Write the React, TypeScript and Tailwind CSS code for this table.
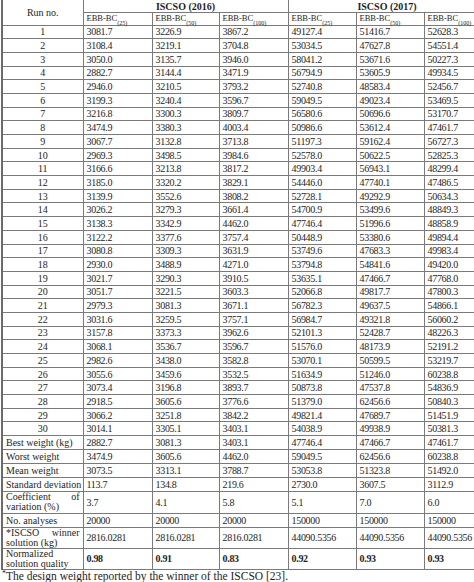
const runs: [string, string, string, string, string, string][] = [
  ['3081.7', '3226.9', '3867.2', '49127.4', '51416.7', '52628.3'],
  ['3108.4', '3219.1', '3704.8', '53034.5', '47627.8', '54551.4'],
  ['3050.0', '3135.7', '3946.0', '58041.2', '53671.6', '50227.3'],
  ['2882.7', '3144.4', '3471.9', '56794.9', '53605.9', '49934.5'],
  ['2946.0', '3210.5', '3793.2', '52740.8', '48583.4', '52456.7'],
  ['3199.3', '3240.4', '3596.7', '59049.5', '49023.4', '53469.5'],
  ['3216.8', '3300.3', '3809.7', '56580.6', '50696.6', '53170.7'],
  ['3474.9', '3380.3', '4003.4', '50986.6', '53612.4', '47461.7'],
  ['3067.7', '3132.8', '3713.8', '51197.3', '59162.4', '56727.3'],
  ['2969.3', '3498.5', '3984.6', '52578.0', '50622.5', '52825.3'],
  ['3166.6', '3213.8', '3817.2', '49903.4', '56943.1', '48299.4'],
  ['3185.0', '3320.2', '3829.1', '54446.0', '47740.1', '47486.5'],
  ['3139.9', '3552.6', '3808.2', '52728.1', '49292.9', '50634.3'],
  ['3026.2', '3279.3', '3661.4', '54700.9', '53499.6', '48849.3'],
  ['3138.3', '3342.9', '4462.0', '47746.4', '51996.6', '48858.9'],
  ['3122.2', '3377.6', '3757.4', '50448.9', '53380.6', '49894.4'],
  ['3080.8', '3309.3', '3631.9', '53749.6', '47683.3', '49983.4'],
  ['2930.0', '3488.9', '4271.0', '53794.8', '54841.6', '49420.0'],
  ['3021.7', '3290.3', '3910.5', '53635.1', '47466.7', '47768.0'],
  ['3051.7', '3221.5', '3603.3', '52066.8', '49817.7', '47800.3'],
  ['2979.3', '3081.3', '3671.1', '56782.3', '49637.5', '54866.1'],
  ['3031.6', '3259.5', '3757.1', '56984.7', '49321.8', '56060.2'],
  ['3157.8', '3373.3', '3962.6', '52101.3', '52428.7', '48226.3'],
  ['3068.1', '3536.7', '3596.7', '51576.0', '48173.9', '52191.2'],
  ['2982.6', '3438.0', '3582.8', '53070.1', '50599.5', '53219.7'],
  ['3055.6', '3459.6', '3532.5', '51634.9', '51246.0', '60238.8'],
  ['3073.4', '3196.8', '3893.7', '50873.8', '47537.8', '54836.9'],
  ['2918.5', '3605.6', '3776.6', '51379.0', '62456.6', '50840.3'],
  ['3066.2', '3251.8', '3842.2', '49821.4', '47689.7', '51451.9'],
  ['3014.1', '3305.1', '3403.1', '54038.9', '49938.9', '50381.3'],
];

const stats: { label: string; values: string[]; h: string; justify?: boolean; bold?: boolean }[] = [
  { label: 'Best weight (kg)', values: ['2882.7', '3081.3', '3403.1', '47746.4', '47466.7', '47461.7'], h: 'h-[14px]' },
  { label: 'Worst weight', values: ['3474.9', '3605.6', '4462.0', '59049.5', '62456.6', '60238.8'], h: 'h-[13.5px]' },
  { label: 'Mean weight', values: ['3073.5', '3313.1', '3788.7', '53053.8', '51323.8', '51492.0'], h: 'h-[14px]' },
  { label: 'Standard deviation', values: ['113.7', '134.8', '219.6', '2730.0', '3607.5', '3112.9'], h: 'h-[14px]' },
  { label: 'Coefficient of variation (%)', values: ['3.7', '4.1', '5.8', '5.1', '7.0', '6.0'], h: 'h-[22px]', justify: true },
  { label: 'No. analyses', values: ['20000', '20000', '20000', '150000', '150000', '150000'], h: 'h-[14px]' },
  { label: '*ISCSO winner solution (kg)', values: ['2816.0281', '2816.0281', '2816.0281', '44090.5356', '44090.5356', '44090.5356'], h: 'h-[20px]', justify: true },
  { label: 'Normalized solution quality', values: ['0.98', '0.91', '0.83', '0.92', '0.93', '0.93'], h: 'h-[21px]', bold: true },
];

const cell = 'border border-[#7a7a7a] px-[3px] py-0 align-middle whitespace-nowrap';
const num = `${cell} tracking-[-0.3px]`;

function Sub({ n }: { n: string }) {
  return (
    <span>
      EBB-BC<sub className="text-[6px] align-[-2px]">({n})</sub>
    </span>
  );
}

export default function App() {
  return (
    <div className="w-[474px] h-[582px] overflow-hidden bg-white text-[#1e1e1e]" style={{ fontFamily: '"Liberation Serif", serif' }}>
      <div className="w-[486px] pl-[1px]">
        <table className="table-fixed border-collapse w-[484px] text-[10px] leading-[11px] border-l-2 border-l-[#6b6b6b]">
          <colgroup>
            <col className="w-[81px]" />
            <col className="w-[69px]" />
            <col className="w-[67px]" />
            <col className="w-[69px]" />
            <col className="w-[68px]" />
            <col className="w-[68px]" />
            <col className="w-[62px]" />
          </colgroup>
          <thead>
            <tr className="h-[12.5px]">
              <th rowSpan={2} className={`${cell} border-t-0 font-normal text-center`}>Run no.</th>
              <th colSpan={3} className={`${cell} border-t-0 font-bold text-center`}>ISCSO (2016)</th>
              <th colSpan={3} className={`${cell} border-t-0 font-bold text-center`}>ISCSO (2017)</th>
            </tr>
            <tr className="h-[12.5px]">
              {['25', '50', '100', '25', '50', '100'].map((n, i) => (
                <th key={i} className={`${cell} font-normal text-left text-[8.5px]`}>
                  <Sub n={n} />
                </th>
              ))}
            </tr>
          </thead>
          <tbody>
            {runs.map((r, i) => (
              <tr key={i} className="h-[13.7px]">
                <td className={`${cell} text-center`}>{i + 1}</td>
                {r.map((v, j) => (
                  <td key={j} className={num}>{v}</td>
                ))}
              </tr>
            ))}
            {stats.map((s) => (
              <tr key={s.label} className={s.h}>
                <td className={`border border-[#7a7a7a] px-[3px] py-0 align-middle ${s.justify ? 'text-justify leading-[10px]' : s.bold ? 'leading-[10px]' : 'whitespace-nowrap'}`}>
                  {s.label}
                </td>
                {s.values.map((v, j) => (
                  <td key={j} className={`${num} ${s.bold ? 'font-bold' : ''}`}>{v}</td>
                ))}
              </tr>
            ))}
          </tbody>
        </table>
        <p className="text-[11.5px] leading-[13px] pl-[1px]">
          <sup className="text-[8px] leading-none">*</sup>The design weight reported by the winner of the ISCSO [23].
        </p>
      </div>
    </div>
  );
}
